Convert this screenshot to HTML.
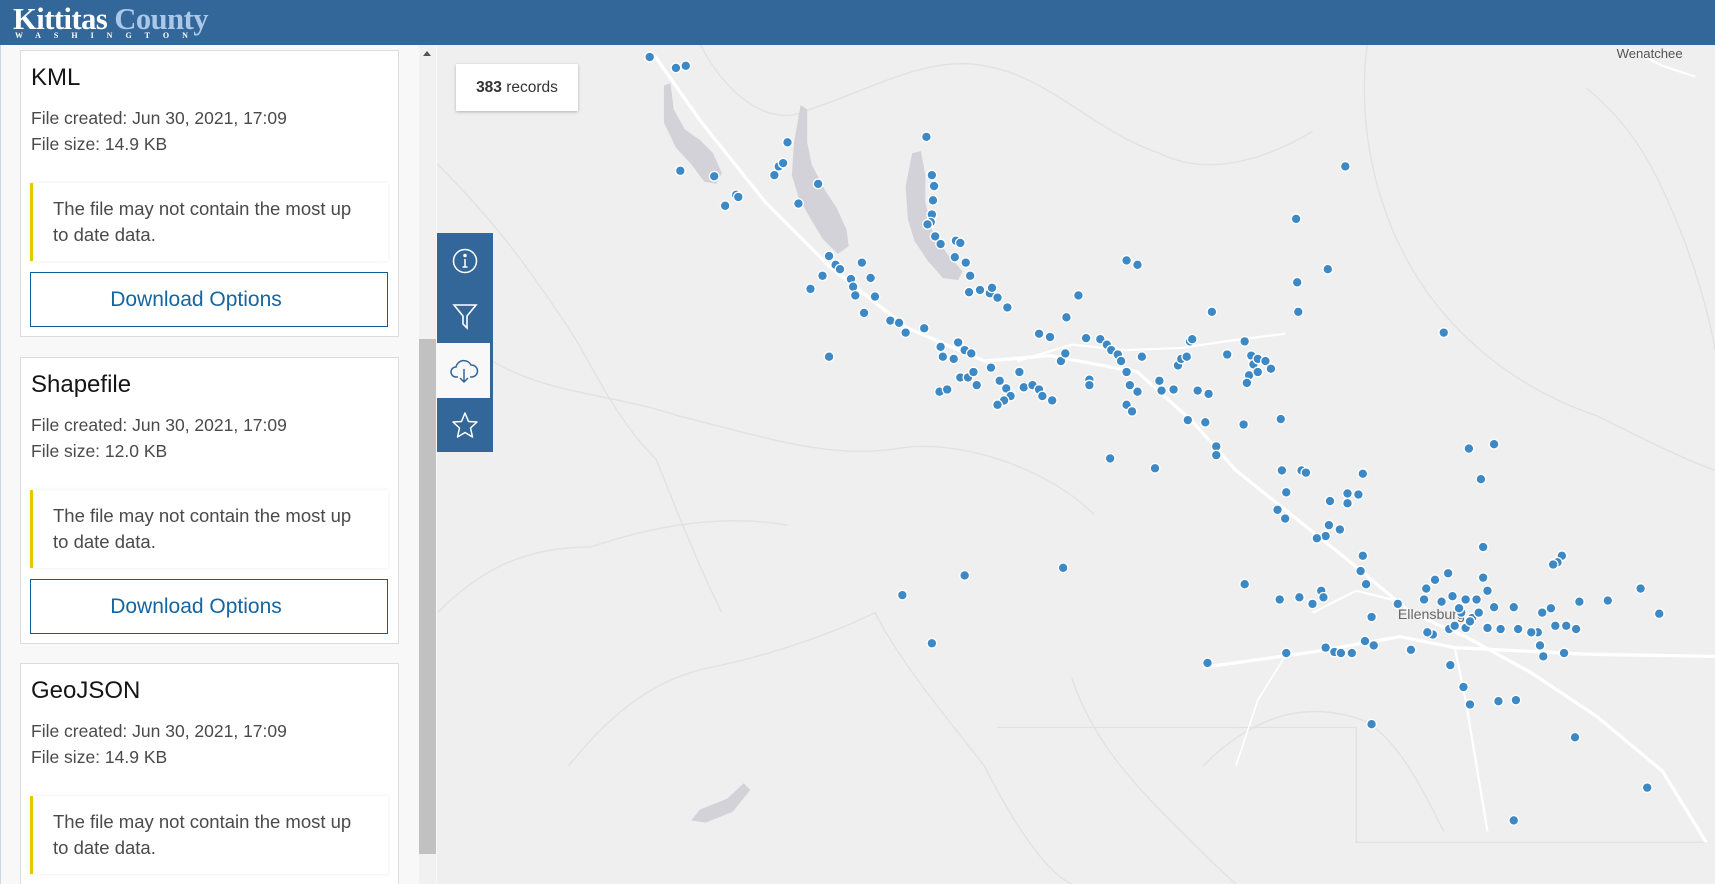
<!DOCTYPE html>
<html><head><meta charset="utf-8"><style>
*{margin:0;padding:0;box-sizing:border-box}
body{width:1715px;height:884px;overflow:hidden;background:#efefef;font-family:"Liberation Sans",sans-serif;position:relative}
#hdr{position:absolute;left:0;top:0;width:1715px;height:45px;background:#346799;z-index:5}
#logo{position:absolute;left:13px;top:2px;font-family:"Liberation Serif",serif;font-weight:bold;font-size:30.5px;color:#fff;letter-spacing:-0.5px}
#logo span{color:#a9c8ea}
#wash{position:absolute;left:15px;top:31px;font-family:"Liberation Serif",serif;font-weight:bold;font-size:8px;color:#fff;letter-spacing:13px}
#side{position:absolute;left:0;top:45px;width:437px;height:839px;background:#f8f8f8;z-index:3;overflow:hidden;border-left:1px solid #c9d7e6}
.card{position:absolute;left:19px;width:379px;background:#fff;border:1px solid #dcdcdc}
.card h2{position:absolute;left:10px;top:13px;font-weight:normal;font-size:24px;color:#151515}
.card .m{position:absolute;left:10px;top:54px;font-size:17.5px;line-height:26px;color:#4a4a4a}
.warn{position:absolute;left:9px;top:132px;width:358px;height:78px;background:#fff;border-left:3px solid #e6c800;box-shadow:0 0 4px rgba(0,0,0,.08);font-size:18.5px;line-height:26px;color:#4a4a4a;padding:13px 0 0 20px;white-space:nowrap}
.btn{position:absolute;left:9px;top:221px;width:358px;height:55px;border:1px solid #0c5f99;color:#1466a2;font-size:21px;text-align:center;line-height:53px;padding-right:26px}
#sb{position:absolute;left:418px;top:0;width:17px;height:839px;background:#f1f1f1}
#thumb{position:absolute;left:418px;top:294px;width:17px;height:515px;background:#c1c1c1}
#tabs{position:absolute;left:437px;top:233px;width:56px;height:219px;background:#346799;z-index:4}
.t{position:absolute;left:0;width:56px;height:55px;display:flex;align-items:center;justify-content:center}
#rec{position:absolute;left:456px;top:64px;width:122px;height:47px;background:#fff;box-shadow:0 1px 3px rgba(0,0,0,.25);z-index:2;font-size:15.5px;color:#333;line-height:47px;text-align:center}
#map{position:absolute;left:0;top:0;z-index:1}
</style></head><body>
<div id="hdr"><div id="logo">Kittitas <span>County</span></div><div id="wash">WASHINGTON</div></div>
<svg id="map" width="1715" height="884" viewBox="0 0 1568 808">
<g fill="none" stroke="#e2e2e2" stroke-width="1.3">
<path d="M400,150 C450,200 480,240 520,300 C540,330 560,380 600,420 C620,470 640,520 660,560"/>
<path d="M450,330 C500,360 560,360 620,380 C700,400 760,420 820,410 C880,400 960,430 1000,470"/>
<path d="M520,700 C560,650 600,620 650,610 C700,600 760,580 800,560 C820,600 860,650 900,700 C930,760 960,800 980,808"/>
<path d="M640,40 C660,80 700,120 740,100 C800,80 850,50 900,60 C960,70 1000,120 1060,140 C1100,160 1150,150 1200,120"/>
<path d="M1250,40 C1240,120 1260,200 1300,260 C1340,320 1400,360 1460,380 C1500,400 1540,420 1568,430"/>
<path d="M400,560 C440,520 480,500 540,500 C600,480 660,470 720,480"/>
<path d="M1100,700 C1150,650 1200,640 1250,660 C1280,680 1300,720 1320,760"/>
<path d="M912,665 L1240,665 L1240,770 L1560,770"/>
<path d="M1450,80 C1500,120 1520,170 1540,220 C1555,260 1565,300 1568,320"/>
<path d="M980,620 C1000,680 1040,720 1080,760 C1100,780 1120,800 1130,808"/>
</g>
<g fill="none" stroke="#fff" stroke-width="3">
<path d="M598,50 L640,110 L700,185 L760,245 L830,300 L900,330 L960,325 L1040,340 L1090,385 L1130,430 L1180,470 L1230,510 L1290,560 L1340,582 L1400,615 L1460,655 L1520,705 L1560,770"/>
<path d="M1100,610 L1200,596 L1280,582 L1330,592 L1450,598 L1568,600"/>
<path d="M930,330 L980,315 L1030,320 L1080,318 L1120,312 L1175,305" stroke-width="2"/>
<path d="M1200,560 L1240,540 L1280,550" stroke-width="2"/>
<path d="M1330,592 L1340,640 L1350,700 L1360,760" stroke-width="2"/>
<path d="M1176,598 L1150,640 L1130,700" stroke-width="1.5"/>
<path d="M1490,45 L1520,60 L1550,70" stroke-width="2"/>
</g>
<g fill="#d2d2d8">
<path d="M607,78 L613,76 L616,100 L626,118 L640,128 L652,140 L660,158 L655,168 L644,166 L632,150 L618,135 L607,112Z"/>
<path d="M732,96 L738,100 L738,130 L742,150 L755,175 L765,190 L774,210 L776,225 L766,232 L752,218 L740,198 L730,180 L724,160 L726,130Z"/>
<path d="M834,140 L842,138 L846,160 L846,185 L852,210 L866,232 L880,248 L876,256 L862,254 L848,238 L836,220 L830,200 L828,170Z"/>
<path d="M640,740 L665,730 L680,716 L686,722 L670,742 L645,752 L632,750Z"/>
</g>
<text x="1478" y="53" font-size="12" fill="#555" font-family="Liberation Sans">Wenatchee</text>
<text x="1278" y="566" font-size="13" fill="#666" font-family="Liberation Sans">Ellensburg</text>
<g id="dots" fill="#3d89c5" stroke="#fff" stroke-width="1.2"></g>
</svg>
<div id="rec"><b style="font-weight:bold">383</b> records</div>
<div id="side">
<div class="card" style="top:5px;height:287px"><h2>KML</h2><div class="m">File created: Jun 30, 2021, 17:09<br>File size: 14.9 KB</div><div class="warn">The file may not contain the most up<br>to date data.</div><div class="btn">Download Options</div></div>
<div class="card" style="top:312px;height:287px"><h2>Shapefile</h2><div class="m">File created: Jun 30, 2021, 17:09<br>File size: 12.0 KB</div><div class="warn">The file may not contain the most up<br>to date data.</div><div class="btn">Download Options</div></div>
<div class="card" style="top:618px;height:260px"><h2>GeoJSON</h2><div class="m">File created: Jun 30, 2021, 17:09<br>File size: 14.9 KB</div><div class="warn">The file may not contain the most up<br>to date data.</div></div>
<div id="sb"></div><div id="thumb"></div>
<div style="position:absolute;left:422px;top:6px;width:0;height:0;border-left:4px solid transparent;border-right:4px solid transparent;border-bottom:5px solid #555"></div>
</div>
<div id="tabs">
<div class="t" style="top:0"><svg width="26" height="26" viewBox="0 0 26 26" fill="none" stroke="#fff" stroke-width="1.5"><circle cx="13" cy="13" r="11.5"/><circle cx="13" cy="7.5" r="1" fill="#fff"/><path d="M13 11v8M10.5 19h5"/></svg></div>
<div class="t" style="top:55px"><svg width="26" height="28" viewBox="0 0 26 28" fill="none" stroke="#fff" stroke-width="1.6"><path d="M2 3H24L15 14V26L11 22V14Z"/></svg></div>
<div class="t" style="top:110px;background:#f8f8f8;width:53px"><svg width="30" height="28" viewBox="0 0 30 28" fill="none" stroke="#346799" stroke-width="1.5"><path d="M9 20H7A5 5 0 0 1 7 10A8 8 0 0 1 22 8A6 6 0 0 1 23 20H21"/><path d="M15 12V25M11 21L15 25L19 21"/></svg></div>
<div class="t" style="top:164px"><svg width="28" height="28" viewBox="0 0 28 28" fill="none" stroke="#fff" stroke-width="1.5" stroke-linejoin="round"><path d="M14 2L17.5 10.5L26 11L19.5 17L21.5 26L14 21.5L6.5 26L8.5 17L2 11L10.5 10.5Z"/></svg></div>
</div>
<script>
var d=[594,52,618,62,627,60,622,156,653,161,663,188,673,178,675,180,720,130,708,160,712,152,716,149,730,186,748,168,847,125,852,160,854,170,853,183,852,196,851,203,848,205,855,216,860,223,874,220,878,222,873,235,883,240,887,252,886,267,896,265,905,268,907,263,912,272,921,281,758,234,764,242,768,246,788,240,752,252,741,264,778,255,780,262,796,254,800,271,782,270,790,286,814,293,822,295,828,304,845,300,860,317,862,326,876,313,882,320,888,323,872,328,878,345,885,345,890,340,893,352,906,336,914,348,920,355,932,340,936,354,944,352,950,356,953,362,924,362,918,366,912,370,962,366,859,358,866,356,758,326,950,305,960,308,975,290,986,270,970,330,974,323,993,309,1006,310,1012,315,1016,320,1022,324,1025,330,1030,340,1033,352,1030,370,1035,376,1044,326,1040,358,996,347,996,352,1030,238,1040,242,1060,348,1062,357,1073,356,1077,334,1080,328,1085,326,1088,312,1090,310,1095,357,1105,360,1108,285,1122,324,1138,312,1144,325,1146,333,1150,328,1157,330,1162,337,1142,343,1140,350,1150,340,1086,384,1102,386,1112,408,1112,416,1137,388,1015,419,1056,428,1171,383,1185,200,1186,258,1187,285,1214,246,1230,152,1320,304,1172,430,1190,430,1194,432,1246,433,1176,450,1216,458,1232,460,1242,452,1168,466,1175,474,1215,480,1212,490,1204,492,1225,484,1246,508,1244,522,1249,534,1254,564,1278,552,1256,590,1248,586,1236,597,1220,596,1212,592,1226,597,1176,597,1104,606,1138,534,1170,548,1188,546,1200,552,1208,540,1210,546,1304,538,1312,530,1324,524,1302,548,1325,575,1343,410,1366,406,1354,438,1356,500,1428,508,1424,514,1420,516,1336,560,1340,548,1356,528,1360,540,1366,555,1346,565,1330,572,1340,574,1344,568,1372,575,1360,574,1384,555,1388,575,1406,578,1410,560,1418,556,1422,572,1432,572,1444,550,1470,549,1500,538,1517,561,1408,590,1400,578,1411,600,1441,575,1430,597,1310,580,1290,594,1305,578,1326,608,1338,628,1344,644,1370,641,1386,640,1384,750,1440,674,1506,720,1254,662,825,544,882,526,972,519,852,588,1232,451,1318,550,1328,545,1334,556,1350,548,1352,560];
var g=document.getElementById('dots'),s='';
for(var i=0;i<d.length;i+=2)s+='<circle cx="'+d[i]+'" cy="'+d[i+1]+'" r="4.4"/>';
g.innerHTML=s;
</script>
</body></html>
